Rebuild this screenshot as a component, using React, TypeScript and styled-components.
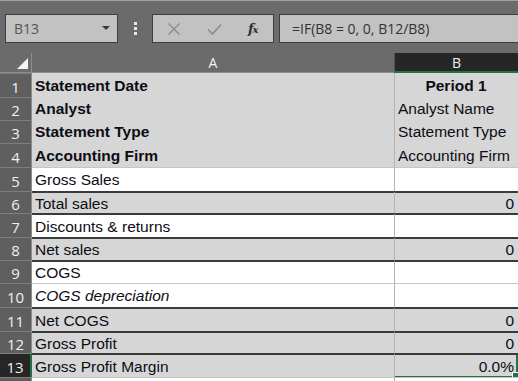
import React from "react";
import styled, { createGlobalStyle, css } from "styled-components";

const Global = createGlobalStyle`
  html, body { margin: 0; padding: 0; background: #6b6b6b; overflow: hidden; }
  * { box-sizing: border-box; }
`;

const Page = styled.div`
  width: 518px;
  height: 381px;
  overflow: hidden;
  background: #6b6b6b;
  display: flex;
  flex-direction: column;
`;

const Toolbar = styled.div`
  height: 53px;
  flex: none;
  display: flex;
  align-items: flex-start;
  padding-top: 13px;
  padding-left: 5px;
  background: #6b6b6b;
  border-top: 1px solid #a2a2a2;
`;

const NameBox = styled.div`
  width: 113px;
  height: 29px;
  background: #c2c2c2;
  border: 1px solid #3e3e3e;
  display: flex;
  align-items: center;
  justify-content: space-between;
  padding: 0 7px 0 8px;
  font-family: "Open Sans", "Liberation Sans", sans-serif;
  font-size: 14px;
  color: #555;
`;

const Caret = styled.span`
  width: 0;
  height: 0;
  border-left: 4px solid transparent;
  border-right: 4px solid transparent;
  border-top: 4px solid #3a3a3a;
  margin-top: -2px;
`;

const Dots = styled.div`
  width: 34px;
  height: 29px;
  display: flex;
  flex-direction: column;
  align-items: center;
  justify-content: center;
  gap: 2px;
  & > span {
    width: 3px;
    height: 3px;
    background: #e6e6e6;
  }
`;

const FxGroup = styled.div`
  width: 122px;
  height: 29px;
  background: #c2c2c2;
  border: 1px solid #3e3e3e;
  display: flex;
  align-items: center;
  gap: 26px;
  padding-left: 14px;
`;

const FxText = styled.span`
  font-family: "DejaVu Serif", "Liberation Serif", serif;
  font-style: italic;
  font-weight: bold;
  font-size: 13px;
  color: #2f2f2f;
  letter-spacing: -1px;
  & > small { font-size: 10px; }
`;

const FormulaBar = styled.div`
  flex: 1;
  margin-left: 5px;
  margin-right: -4px;
  height: 29px;
  background: #c2c2c2;
  border: 1px solid #3e3e3e;
  display: flex;
  align-items: center;
  padding-left: 12px;
  font-family: "Open Sans", "Liberation Sans", sans-serif;
  font-size: 14px;
  color: #333;
`;

const HeaderRow = styled.div`
  height: 20px;
  flex: none;
  display: flex;
  background: #6b6b6b;
  font-family: "Open Sans", "Liberation Sans", sans-serif;
  font-size: 14px;
  color: #f2f2f2;
`;

const Corner = styled.div`
  width: 32px;
  flex: none;
  border-right: 1px solid #8c8c8c;
  border-bottom: 1px solid #8c8c8c;
  position: relative;
  &::after {
    content: "";
    position: absolute;
    right: 3px;
    bottom: 3px;
    width: 0;
    height: 0;
    border-left: 11px solid transparent;
    border-bottom: 11px solid #f4f4f4;
  }
`;

const ColHead = styled.div<{ $selected?: boolean; $w?: number }>`
  ${(p) => (p.$w ? css`width: ${p.$w}px; flex: none;` : css`flex: 1;`)}
  display: flex;
  align-items: center;
  justify-content: center;
  border-bottom: 1px solid #8c8c8c;
  ${(p) =>
    p.$selected &&
    css`
      background: #262626;
      border-bottom: 2px solid #217346;
      border-left: 1px solid #555;
    `}
`;

const Body = styled.div`
  flex: 1;
  display: flex;
  flex-direction: column;
  background: #ffffff;
`;

type Line = "none" | "light" | "dark";

const Row = styled.div<{ $h: number }>`
  height: ${(p) => p.$h}px;
  flex: none;
  display: flex;
`;

const RowHead = styled.div<{ $selected?: boolean }>`
  width: 32px;
  flex: none;
  background: ${(p) => (p.$selected ? "#262626" : "#5f5f5f")};
  border-top: 1px solid #7e7e7e;
  border-right: ${(p) => (p.$selected ? "2px solid #217346" : "1px solid #8c8c8c")};
  color: #f0f0f0;
  font-family: "Open Sans", "Liberation Sans", sans-serif;
  font-size: 15px;
  display: flex;
  align-items: center;
  justify-content: center;
  padding-top: 2px;
`;

const lineCss = (l: Line) =>
  l === "dark"
    ? css`border-top: 2px solid #3a3a3a;`
    : l === "light"
    ? css`border-top: 1px solid #c6c6c6;`
    : css`border-top: 0;`;

const Cell = styled.div<{
  $gray?: boolean;
  $line: Line;
  $align?: "left" | "center" | "right";
  $bold?: boolean;
  $italic?: boolean;
  $w?: number;
}>`
  ${(p) => (p.$w ? css`width: ${p.$w}px; flex: none;` : css`flex: 1;`)}
  background: ${(p) => (p.$gray ? "#d6d6d6" : "#ffffff")};
  ${(p) => lineCss(p.$line)}
  display: flex;
  align-items: center;
  justify-content: ${(p) =>
    p.$align === "center" ? "center" : p.$align === "right" ? "flex-end" : "flex-start"};
  padding: 1px 4px 0 3px;
  font-family: "Liberation Sans", Arial, sans-serif;
  font-size: 15.5px;
  font-weight: ${(p) => (p.$bold ? 700 : 400)};
  font-style: ${(p) => (p.$italic ? "italic" : "normal")};
  color: #0d0d14;
  white-space: nowrap;
  overflow: hidden;
`;

const CellB = styled(Cell)`
  border-left: 1px solid #b4b4b4;
  position: relative;
`;

const Selection = styled.div`
  position: absolute;
  left: -2px;
  top: -2px;
  right: 0;
  bottom: -1px;
  border: 2px solid #217346;
  pointer-events: none;
  &::after {
    content: "";
    position: absolute;
    right: -3px;
    bottom: -3px;
    width: 5px;
    height: 5px;
    background: #217346;
    border: 1px solid #fff;
  }
`;

type RowData = {
  n: number;
  a: string;
  b?: string;
  gray: boolean;
  line: Line;
  h: number;
  aBold?: boolean;
  bBold?: boolean;
  italic?: boolean;
  bAlign?: "left" | "center" | "right";
  selected?: boolean;
};

const rows: RowData[] = [
  { n: 1, a: "Statement Date", b: "Period 1", gray: true, line: "none", h: 24, aBold: true, bBold: true, bAlign: "center" },
  { n: 2, a: "Analyst", b: "Analyst Name", gray: true, line: "none", h: 23, aBold: true },
  { n: 3, a: "Statement Type", b: "Statement Type", gray: true, line: "none", h: 23, aBold: true },
  { n: 4, a: "Accounting Firm", b: "Accounting Firm", gray: true, line: "none", h: 24, aBold: true },
  { n: 5, a: "Gross Sales", gray: false, line: "light", h: 24 },
  { n: 6, a: "Total sales", b: "0", gray: true, line: "dark", h: 22, bAlign: "right" },
  { n: 7, a: "Discounts & returns", gray: false, line: "dark", h: 24 },
  { n: 8, a: "Net sales", b: "0", gray: true, line: "dark", h: 23, bAlign: "right" },
  { n: 9, a: "COGS", gray: false, line: "dark", h: 23 },
  { n: 10, a: "COGS depreciation", gray: false, line: "light", h: 24, italic: true },
  { n: 11, a: "Net COGS", b: "0", gray: true, line: "dark", h: 24, bAlign: "right" },
  { n: 12, a: "Gross Profit", b: "0", gray: true, line: "dark", h: 22, bAlign: "right" },
  { n: 13, a: "Gross Profit Margin", b: "0.0%", gray: true, line: "dark", h: 24, bAlign: "right", selected: true },
];

const COLB = 124;

export default function App() {
  return (
    <>
      <Global />
      <Page>
        <Toolbar>
          <NameBox>
            <span>B13</span>
            <Caret />
          </NameBox>
          <Dots>
            <span />
            <span />
            <span />
          </Dots>
          <FxGroup>
            <svg width="14" height="14" viewBox="0 0 14 14">
              <path d="M1.5 1.5 L12.5 12.5 M12.5 1.5 L1.5 12.5" stroke="#8c8c8c" strokeWidth="1.4" fill="none" />
            </svg>
            <svg width="15" height="14" viewBox="0 0 15 14">
              <path d="M1 7.5 L5.5 12 L14 2.5" stroke="#8c8c8c" strokeWidth="1.6" fill="none" />
            </svg>
            <FxText>
              f<small>x</small>
            </FxText>
          </FxGroup>
          <FormulaBar>=IF(B8 = 0, 0, B12/B8)</FormulaBar>
        </Toolbar>
        <HeaderRow>
          <Corner />
          <ColHead>A</ColHead>
          <ColHead $selected $w={COLB}>B</ColHead>
        </HeaderRow>
        <Body>
          {rows.map((r) => (
            <Row key={r.n} $h={r.h}>
              <RowHead $selected={r.selected}>{r.n}</RowHead>
              <Cell $gray={r.gray} $line={r.line} $bold={r.aBold} $italic={r.italic}>
                {r.a}
              </Cell>
              <CellB
                $w={COLB}
                $gray={r.gray}
                $line={r.line}
                $bold={r.bBold}
                $align={r.bAlign}
              >
                {r.b}
                {r.selected && <Selection />}
              </CellB>
            </Row>
          ))}
          <Row $h={6}>
            <RowHead />
            <Cell $line="light" />
            <CellB $w={COLB} $line="light" />
          </Row>
        </Body>
      </Page>
    </>
  );
}
